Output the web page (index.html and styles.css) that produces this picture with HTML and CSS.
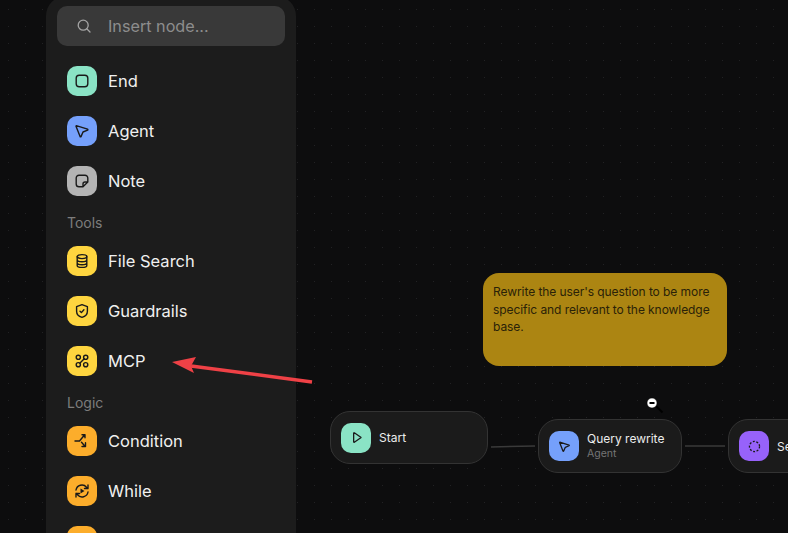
FILE: index.html
```html
<!DOCTYPE html>
<html lang="en">
<head>
<meta charset="utf-8">
<title>Insert node</title>
<link rel="stylesheet" href="styles.css">
</head>
<body>
<div class="app">
  <aside class="panel">
    <div class="search">
      <svg class="search-icon" viewBox="0 0 16 16"><circle cx="7.2" cy="7.2" r="5"/><path d="M11 11l3 3"/></svg>
      <span>Insert node...</span>
    </div>
    <ul class="list">
      <li class="item"><span class="ico mint"><svg viewBox="0 0 16 16"><rect x="2.2" y="2.2" width="11.6" height="11.6" rx="3"/></svg></span>End</li>
      <li class="item"><span class="ico blue"><svg viewBox="0 0 16 16"><path d="M2.2 2.6l11.4 3.6a.5.5 0 0 1 0 .9L9 9l-2 4.6a.5.5 0 0 1-.9 0L2 3.2z"/></svg></span>Agent</li>
      <li class="item"><span class="ico grey"><svg viewBox="0 0 16 16"><path d="M9 13.8H5a2.8 2.8 0 0 1-2.8-2.8V5A2.8 2.8 0 0 1 5 2.200h6A2.8 2.8 0 0 1 13.800 5v4zM13.600 9H11a2 2 0 0 0-2 2v2.600"/></svg></span>Note</li>
      <li class="group">Tools</li>
      <li class="item"><span class="ico yellow"><svg viewBox="0 0 16 16"><ellipse cx="8" cy="3.600" rx="4.800" ry="2"/><path d="M3.200 3.600v8.800c0 1.100 2.200 2 4.800 2s4.800-.9 4.800-2V3.600M3.200 6.800c0 1.100 2.200 2 4.800 2s4.800-.9 4.800-2M3.200 9.800c0 1.100 2.200 2 4.800 2s4.800-.9 4.800-2"/></svg></span>File Search</li>
      <li class="item"><span class="ico yellow"><svg viewBox="0 0 16 16"><path d="M8 1.600l5.400 2v4.600c0 3.200-2.200 5.200-5.400 6.200-3.200-1-5.400-3-5.400-6.200V3.600z"/><path d="M6 8.300l1.400 1.300 2.500-2.800"/></svg></span>Guardrails</li>
      <li class="item"><span class="ico yellow"><svg viewBox="0 0 16 16"><circle cx="4.300" cy="4.300" r="2.100"/><circle cx="11.700" cy="4.300" r="2.100"/><circle cx="4.300" cy="11.700" r="2.100"/><circle cx="11.700" cy="11.700" r="2.100"/><path d="M10.200 5.800L5.800 10.200"/></svg></span>MCP</li>
      <li class="group">Logic</li>
      <li class="item"><span class="ico orange"><svg viewBox="0 0 16 16"><path d="M1 8h4.500L10.500 2M8 1.800h3v3M7.500 9.200l3.500 4M11.500 9.800v3.700H8"/></svg></span>Condition</li>
      <li class="item"><span class="ico orange"><svg viewBox="0 0 16 16"><path d="M2 7a6 6 0 0 1 10.500-2.800L14 5.500M14 2v3.500h-3.500M14 9a6 6 0 0 1-10.500 2.800L2 10.500M2 14v-3.500h3.500"/><path class="solid" d="M6.500 5.500l4 2.500-4 2.500z"/></svg></span>While</li>
      <li class="item"><span class="ico orange"></span></li>
    </ul>
  </aside>

  <main class="canvas">
    <svg class="edges" viewBox="0 0 492 533">
      <path d="M195 447L239 446M389 446L429 446"/>
    </svg>
    <div class="sticky">Rewrite the user's question to be more specific and relevant to the knowledge base.</div>

    <div class="node node-start">
      <span class="ico mint"><svg viewBox="0 0 16 16"><path d="M4.500 2.600v10.800a.5.5 0 0 0 .8.400l8-5.400a.5.5 0 0 0 0-.8l-8-5.400a.5.5 0 0 0-.8.400z"/></svg></span>
      <div class="node-text"><strong>Start</strong></div>
    </div>
    <div class="node node-query">
      <span class="ico blue"><svg viewBox="0 0 16 16"><path d="M2.200 2.600l11.400 3.600a.5.5 0 0 1 0 .9L9 9l-2 4.600a.5.5 0 0 1-.9 0L2 3.200z"/></svg></span>
      <div class="node-text node-text-double"><strong>Query rewrite</strong><small>Agent</small></div>
    </div>
    <div class="node node-search">
      <span class="ico purple"><svg viewBox="0 0 16 16"><circle class="dashed" cx="8" cy="8" r="6.200"/></svg></span>
      <div class="node-text"><strong>Search</strong></div>
    </div>

    <svg class="arrow" viewBox="0 0 142 38">
      <path class="shaft" d="M19 18L140 34"/>
      <path class="head" d="M0 14L24 9L19 18L22 25z"/>
    </svg>
    <svg class="cursor" viewBox="0 0 20 20">
      <path class="handle" d="M10 9l6.500 6.500"/>
      <circle class="lens" cx="6" cy="6" r="5"/>
      <path class="minus" d="M3.500 6h5"/>
    </svg>
  </main>
</div>
</body>
</html>
```
FILE: styles.css
```css
* { box-sizing: border-box; }
html, body { margin: 0; height: 100%; }
body {
  overflow: hidden;
  background: #0d0d0e;
  font-family: Inter, "Liberation Sans", sans-serif;
  color: #f0f0f0;
}
.app {
  display: flex;
  height: 533px;
  padding-left: 46px;
  overflow: hidden;
  background-image: radial-gradient(circle, #222224 0.7px, transparent 1px);
  background-size: 17px 17px;
  background-position: 0 1px;
}

.panel {
  flex: 0 0 250px;
  height: 560px;
  margin-top: -4px;
  padding: 10px 11px 0;
  background: #1c1c1c;
  border-radius: 20px 20px 0 0;
}
.search {
  display: flex;
  align-items: center;
  gap: 16px;
  height: 40px;
  padding-left: 19px;
  background: #393939;
  border-radius: 10px;
  font-size: 16.200px;
  color: #8d8d8d;
}
.search-icon {
  width: 16px; height: 16px;
  fill: none; stroke: #a5a5a5; stroke-width: 1.300; stroke-linecap: round;
}
.list { list-style: none; margin: 10px 0 0; padding: 0 0 0 10px; }
.item {
  display: flex;
  align-items: center;
  gap: 11px;
  height: 50px;
  font-size: 16.500px;
  font-weight: 400;
  color: #f0f0f0;
}
.group {
  height: 30px;
  padding-top: 8px;
  font-size: 14px;
  line-height: 17px;
  color: #7d7d7d;
}
.ico {
  flex: none;
  display: flex;
  align-items: center;
  justify-content: center;
  width: 30px; height: 30px;
  border-radius: 10px;
}
.ico svg {
  width: 16px; height: 16px;
  fill: none; stroke: #1a1a1a; stroke-width: 1.400;
  stroke-linecap: round; stroke-linejoin: round;
}
.ico svg .solid { fill: #1a1a1a; stroke: none; }
.ico svg .dashed { stroke-dasharray: 2.400 2; stroke-linecap: butt; }
.mint { background: #8ae3c5; }
.blue { background: #75a0fb; }
.grey { background: #b4b4b4; }
.yellow { background: #fed53f; }
.orange { background: #fcad2b; }
.purple { background: #9762fa; }

.canvas {
  position: relative;
  flex: 1;
  height: 533px;
}
.edges { position: absolute; left: 0; top: 0; width: 492px; height: 533px; fill: none; stroke: #3a3a3a; stroke-width: 1.500; }
.arrow { position: absolute; left: -124px; top: 348px; width: 142px; height: 38px; }
.arrow .shaft { fill: none; stroke: #ef4146; stroke-width: 3.500; }
.arrow .head { fill: #ef4146; }
.sticky {
  position: absolute;
  left: 187px; top: 273px;
  width: 244px; height: 93px;
  padding: 10px 10px;
  background: #ac8512;
  border-radius: 16px;
  font-size: 12px;
  letter-spacing: -0.070px;
  line-height: 17.500px;
  color: #2a2208;
}
.node {
  position: absolute;
  display: flex;
  align-items: center;
  gap: 8px;
  padding-left: 10px;
  background: #1b1b1b;
  border: 1.500px solid #333;
  border-radius: 20px;
}
.node .ico svg { width: 13px; height: 13px; stroke-width: 1.600; }
.node-start { left: 34px; top: 411px; width: 158px; height: 53px; }
.node-query { left: 242px; top: 419px; width: 144px; height: 54px; }
.node-search { left: 432px; top: 419px; width: 144px; height: 54px; }
.node-text { display: flex; flex-direction: column; gap: 1px; }
.node-text-double { padding-bottom: 2px; }
.node-text strong { font-size: 12px; font-weight: 400; line-height: 15px; color: #ececec; white-space: nowrap; }
.node-text small { font-size: 10.500px; line-height: 13px; color: #757575; }
.cursor { position: absolute; left: 350px; top: 397px; width: 20px; height: 20px; }
.cursor .handle { stroke: #000; stroke-width: 2; }
.cursor .lens { fill: #fff; stroke: #000; stroke-width: 0.500; }
.cursor .minus { stroke: #000; stroke-width: 2; }
```
